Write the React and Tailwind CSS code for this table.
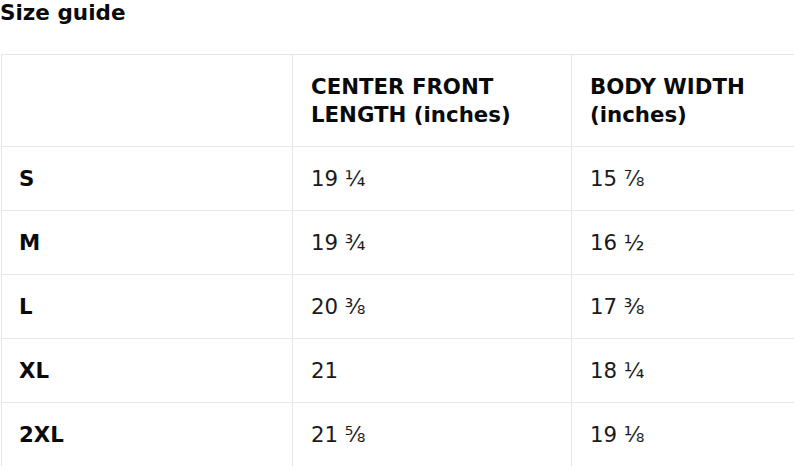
const rows = [
  ['S', '19 ¼', '15 ⅞'],
  ['M', '19 ¾', '16 ½'],
  ['L', '20 ⅜', '17 ⅜'],
  ['XL', '21', '18 ¼'],
  ['2XL', '21 ⅝', '19 ⅛'],
];

export default function App() {
  return (
    <div className="w-[794px] h-[466px] overflow-hidden bg-white text-[#0a0a0a] font-['DejaVu_Sans',sans-serif]">
      <h2 className="text-[21.5px] font-bold leading-[25px]">Size guide</h2>
      <table className="mt-[29px] ml-px border-collapse text-[21.3px] leading-[28px] table-fixed w-[900px]">
        <colgroup>
          <col className="w-[291px]" />
          <col className="w-[279px]" />
          <col className="w-[330px]" />
        </colgroup>
        <thead>
          <tr>
            <th className="border border-[#e6e6e6] py-[17.5px] px-[18px]"></th>
            <th className="border border-[#e6e6e6] py-[17.5px] px-[18px] text-left font-bold">CENTER FRONT LENGTH (inches)</th>
            <th className="border border-[#e6e6e6] py-[17.5px] px-[18px] text-left font-bold">BODY WIDTH<br />(inches)</th>
          </tr>
        </thead>
        <tbody>
          {rows.map((r) => (
            <tr key={r[0]}>
              <td className="border border-[#e6e6e6] py-[17.5px] px-[17px] font-bold">{r[0]}</td>
              <td className="border border-[#e6e6e6] py-[17.5px] px-[18px] text-[#1a1a1a]">{r[1]}</td>
              <td className="border border-[#e6e6e6] py-[17.5px] px-[18px] text-[#1a1a1a]">{r[2]}</td>
            </tr>
          ))}
        </tbody>
      </table>
    </div>
  );
}
